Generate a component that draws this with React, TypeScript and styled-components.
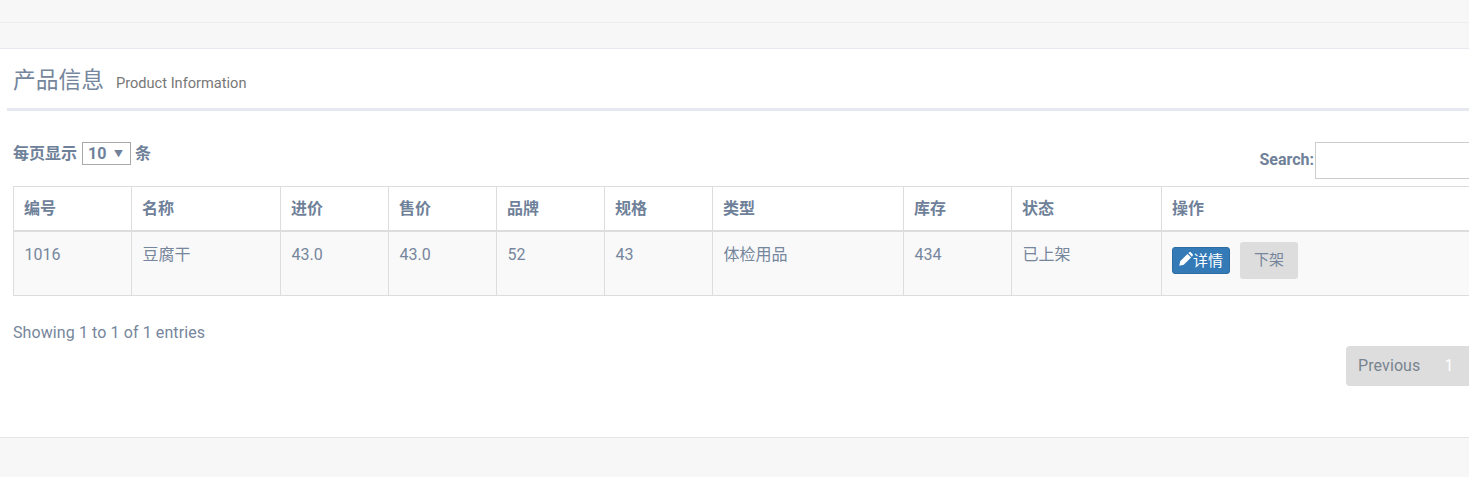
import styled, { createGlobalStyle } from 'styled-components';

const COLOR = {
  text: '#76869c',
  heading: '#6f8199',
  border: '#dddddd',
  divider: '#e5e8ee',
  page: '#f7f7f7',
};

const GlobalStyle = createGlobalStyle`
  html, body {
    margin: 0;
    padding: 0;
    height: 477px;
    overflow: hidden;
    background: #f7f7f7;
    color: ${COLOR.text};
    font-family: Roboto, "Noto Sans CJK SC", sans-serif;
    font-size: 16px;
  }
`;

const Page = styled.div`
  width: 1469px;
  height: 477px;
  overflow: hidden;
`;

const TopBar = styled.div`
  height: 22px;
  border-bottom: 1px solid #eeeeee;
`;

const SubBar = styled.div`
  height: 25px;
  border-bottom: 1px solid ${COLOR.divider};
`;

const Panel = styled.section`
  width: 1540px;
  height: 388px;
  background: #ffffff;
  border-bottom: 1px solid #e5e5e5;
  padding-left: 7px;
`;

const Header = styled.div`
  display: flex;
  align-items: baseline;
  gap: 12px;
  height: 59px;
  padding-left: 6px;
  border-bottom: 3px solid ${COLOR.divider};
`;

const Title = styled.h1`
  margin: 16px 0 0;
  font-size: 22.75px;
  line-height: 32px;
  font-weight: 400;
`;

const Subtitle = styled.small`
  font-size: 14.6px;
  line-height: 20px;
  color: #777777;
`;

const Body = styled.div`
  padding: 31px 0 0 6px;
  width: 1500px;
`;

const Controls = styled.div`
  display: flex;
  justify-content: space-between;
  height: 44px;
`;

const Length = styled.label`
  display: flex;
  align-items: flex-start;
  height: 23px;
  gap: 4px;
  font-weight: 700;
  font-size: 16px;
  line-height: 24px;
  color: ${COLOR.heading};
`;

const FakeSelect = styled.span`
  display: flex;
  align-items: center;
  justify-content: space-between;
  box-sizing: border-box;
  width: 49px;
  height: 23px;
  margin-left: 1px;
  padding: 0 7px 0 5px;
  border: 1px solid #a9a9a9;
  font-size: 16px;

  i {
    font-style: normal;
    font-size: 9px;
  }
`;

const SearchBox = styled.label`
  display: flex;
  align-items: flex-start;
  gap: 1px;
  height: 37px;
  font-weight: 700;
  font-size: 16px;
  line-height: 36px;
  color: ${COLOR.heading};
`;

const SearchInput = styled.input`
  box-sizing: border-box;
  width: 198px;
  height: 37px;
  margin: 0;
  border: 1px solid #cccccc;
  border-radius: 0;
  background: #fff;
  outline: none;
`;

const Table = styled.table`
  width: 1500px;
  table-layout: fixed;
  border-collapse: collapse;
  border: 1px solid ${COLOR.border};
`;

const Th = styled.th`
  height: 44px;
  padding: 0 10px 3px;
  box-sizing: border-box;
  border: 1px solid ${COLOR.border};
  border-bottom-width: 2px;
  text-align: left;
  font-size: 16px;
  font-weight: 700;
  color: ${COLOR.heading};
`;

const Td = styled.td`
  height: 65px;
  padding: 10px 10px 0 10.5px;
  box-sizing: border-box;
  border: 1px solid ${COLOR.border};
  background: #f9f9f9;
  vertical-align: top;
  line-height: 25px;
  font-size: 16px;
`;

const Actions = styled.div`
  display: flex;
  align-items: flex-start;
  gap: 10px;
  margin-left: -0.5px;
`;

const DetailButton = styled.button`
  display: flex;
  align-items: center;
  justify-content: center;
  box-sizing: border-box;
  width: 58px;
  height: 27px;
  margin-top: 5px;
  padding: 0 0 2px;
  border: 1px solid #2e6da4;
  border-radius: 3px;
  background: #337ab7;
  color: #ffffff;
  font-family: inherit;
  font-size: 15px;
`;

const OffShelfButton = styled.button`
  box-sizing: border-box;
  width: 58px;
  height: 37px;
  padding: 0 0 3px;
  border: 0;
  border-radius: 3px;
  background: #dddddd;
  color: ${COLOR.text};
  font-family: inherit;
  font-size: 15px;
`;

const Info = styled.div`
  margin-top: 25px;
  height: 24px;
  line-height: 24px;
  font-size: 16px;
  letter-spacing: 0.1px;
`;

const Pager = styled.div`
  display: flex;
  align-items: center;
  width: 160px;
  height: 40px;
  margin: 1px 0 0 1333px;
  padding-bottom: 2px;
  box-sizing: border-box;
  background: #dddddd;
  border-radius: 4px 0 0 4px;
  font-size: 16px;
  letter-spacing: 0.1px;
`;

const PagerItem = styled.span<{ $light?: boolean }>`
  padding: 0 12px;
  color: ${(p) => (p.$light ? '#ffffff' : '#78848f')};
`;

const columns = [
  { label: '编号', width: 118, value: '1016' },
  { label: '名称', width: 149, value: '豆腐干' },
  { label: '进价', width: 108, value: '43.0' },
  { label: '售价', width: 108, value: '43.0' },
  { label: '品牌', width: 108, value: '52' },
  { label: '规格', width: 108, value: '43' },
  { label: '类型', width: 191, value: '体检用品' },
  { label: '库存', width: 108, value: '434' },
  { label: '状态', width: 150, value: '已上架' },
];

const PencilIcon = () => (
  <svg width='14' height='14' viewBox='0 0 13 13' aria-hidden='true'>
    <path
      fill='#ffffff'
      d='M0.3 12.7 L1.1 8.6 L7.9 1.8 L11.2 5.1 L4.4 11.9 Z M8.7 1 L9.6 0.3 C10 0 10.5 0 10.9 0.3 L12.7 2.1 C13 2.5 13 3 12.7 3.4 L12 4.3 Z'
    />
  </svg>
);

const App = () => {
  return (
    <Page>
      <GlobalStyle />
      <TopBar />
      <SubBar />
      <Panel>
        <Header>
          <Title>产品信息</Title>
          <Subtitle>Product Information</Subtitle>
        </Header>
        <Body>
          <Controls>
            <Length>
              每页显示
              <FakeSelect>
                10<i>▼</i>
              </FakeSelect>
              条
            </Length>
            <SearchBox>
              Search:
              <SearchInput type='text' />
            </SearchBox>
          </Controls>
          <Table>
            <colgroup>
              {columns.map((c) => (
                <col key={c.label} style={{ width: c.width }} />
              ))}
              <col />
            </colgroup>
            <thead>
              <tr>
                {columns.map((c) => (
                  <Th key={c.label}>{c.label}</Th>
                ))}
                <Th>操作</Th>
              </tr>
            </thead>
            <tbody>
              <tr>
                {columns.map((c) => (
                  <Td key={c.label}>{c.value}</Td>
                ))}
                <Td>
                  <Actions>
                    <DetailButton>
                      <PencilIcon />
                      详情
                    </DetailButton>
                    <OffShelfButton>下架</OffShelfButton>
                  </Actions>
                </Td>
              </tr>
            </tbody>
          </Table>
          <Info>Showing 1 to 1 of 1 entries</Info>
          <Pager>
            <PagerItem>Previous</PagerItem>
            <PagerItem $light>1</PagerItem>
          </Pager>
        </Body>
      </Panel>
    </Page>
  );
};

export default App;
